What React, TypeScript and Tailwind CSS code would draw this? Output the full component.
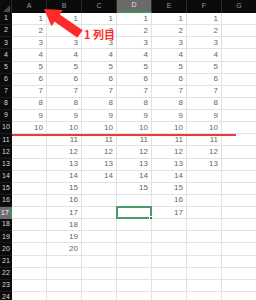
import React from "react";

const cols = ["A", "B", "C", "D", "E", "F", "G"];
// how many numbers each column holds (1..n)
const counts = [10, 20, 14, 15, 17, 13, 0];
const rows = Array.from({ length: 24 }, (_, i) => i + 1);

export default function App() {
  return (
    <div
      className="relative w-[256px] h-[300px] overflow-hidden bg-white"
      style={{ fontFamily: '"Liberation Sans", Arial, sans-serif' }}
    >
      {/* Column header */}
      <div className="flex h-[13px] bg-[#0b0b0b]">
        <div className="relative w-[12px] shrink-0 border-r border-[#2a2a2a]">
          <div className="absolute right-[1px] bottom-[1px] w-0 h-0 border-l-[7px] border-l-transparent border-b-[7px] border-b-[#4a4a4a]" />
        </div>
        {cols.map((c) => (
          <div
            key={c}
            className={
              c === "D"
                ? "w-[35px] shrink-0 flex items-center justify-center text-[7px] text-[#e0e0e0] bg-[#6a6a6a] border-b-2 border-[#3f8f5a] border-r border-r-[#2a2a2a]"
                : "w-[35px] shrink-0 flex items-center justify-center text-[7px] text-[#9a9a9a] border-r border-[#2a2a2a]"
            }
          >
            {c}
          </div>
        ))}
      </div>

      {/* Rows */}
      {rows.map((r) => (
        <div key={r} className="flex h-[12.125px]">
          <div
            className={
              r === 17
                ? "w-[12px] shrink-0 flex items-center justify-center text-[7px] text-white bg-[#6e6e6e] border-r-2 border-[#3f8f5a]"
                : "w-[12px] shrink-0 flex items-center justify-center text-[7px] text-[#d8d8d8] bg-[#0b0b0b] border-b border-[#1c1c1c]"
            }
          >
            {r}
          </div>
          {cols.map((c, ci) => (
            <div
              key={c}
              className="relative w-[35px] shrink-0 flex items-center justify-end pr-[3px] text-[8px] leading-none text-[#666666] border-r border-b border-[#e2e2e2]"
            >
              {r <= counts[ci] ? r : ""}
              {c === "D" && r === 17 && (
                <div className="absolute -left-px -top-px w-[36px] h-[13.125px] border-2 border-[#4e9a6a]">
                  <div className="absolute -right-[3px] -bottom-[3px] w-[4px] h-[4px] bg-[#2e7d4a] border border-white" />
                </div>
              )}
            </div>
          ))}
        </div>
      ))}

      {/* Red separator under row 10 */}
      <div className="absolute left-[12px] top-[134px] w-[224px] h-[2px] bg-[#f0383a]" />

      {/* Arrow annotation */}
      <svg className="absolute left-0 top-0" width="120" height="60" viewBox="0 0 120 60">
        <polygon
          points="44,9 62.9,9.9 59.8,14.4 82.6,30.3 77.4,37.7 54.6,21.8 51.5,26.3"
          fill="#ff2b2b"
        />
      </svg>
      <div
        className="absolute left-[84px] top-[29px] text-[11px] font-bold text-[#ff2b2b] leading-none"
        style={{ fontFamily: '"Noto Sans CJK JP", sans-serif' }}
      >
        1 列目
      </div>
    </div>
  );
}
